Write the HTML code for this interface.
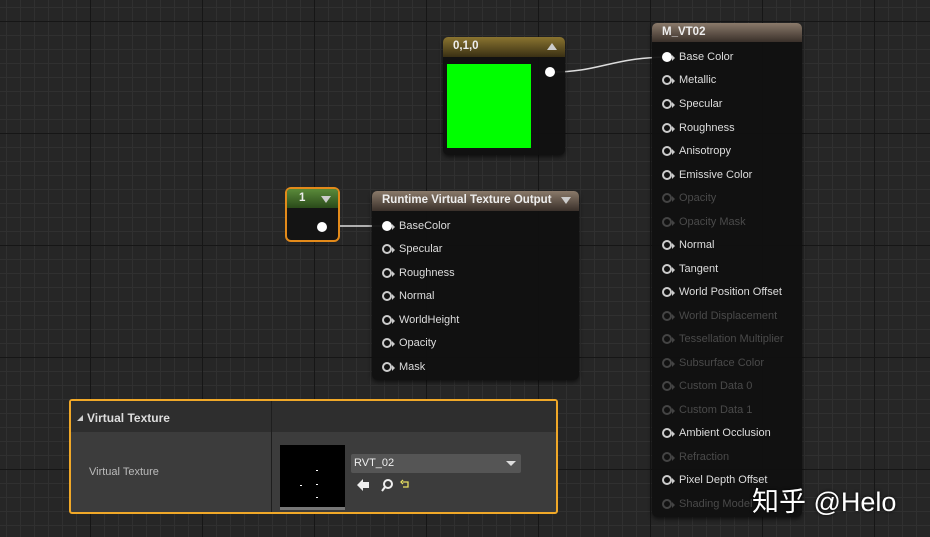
<!DOCTYPE html>
<html><head><meta charset="utf-8"><style>
*{margin:0;padding:0;box-sizing:border-box}
body{width:930px;height:537px;overflow:hidden;position:relative;font-family:"Liberation Sans","DejaVu Sans",sans-serif;
background-color:#262626;
background-image:
linear-gradient(to right,#161616 1px,transparent 1px),
linear-gradient(to bottom,#161616 1px,transparent 1px),
linear-gradient(to right,#303030 1px,transparent 1px),
linear-gradient(to bottom,#303030 1px,transparent 1px);
background-size:112px 112px,112px 112px,14px 14px,14px 14px;
background-position:90px 0,0 21px,6px 0,0 7px;}
.node{position:absolute;background:rgba(16,16,16,0.95);border-radius:5px;box-shadow:0 2px 4px rgba(0,0,0,.6)}
.hdr{height:20px;border-radius:5px 5px 0 0;color:#eee;font-size:11.5px;font-weight:bold;padding:3px 0 0 10px;position:relative;white-space:nowrap}
.row{position:absolute;left:0;font-size:11px;color:#ddd;white-space:nowrap}
.row i{position:absolute;left:10px;top:1px;width:10px;height:10px;border-radius:50%;border:2px solid #ccc}
.row i:after{content:"";position:absolute;right:-5px;top:1px;border-left:3px solid #ccc;border-top:3px solid transparent;border-bottom:3px solid transparent}
.row i.f{background:#fff;border-color:#fff}
.row span{position:absolute;left:27px;top:0px}
.dim{color:#4a4a4a}.dim i{border-color:#444}.dim i:after{border-left-color:#444}
.tri{position:absolute;right:8px;top:6px;border-left:5px solid transparent;border-right:5px solid transparent}
</style></head><body>
<svg style="position:absolute;left:0;top:0" width="930" height="537">
<path d="M552 72 C600 72,610 58,667 57" stroke="#ddd" stroke-width="1.5" fill="none"/>
<path d="M322 226 L384 226" stroke="#ddd" stroke-width="1.5" fill="none"/>
</svg>

<div class="node" style="left:443px;top:37px;width:122px;height:118px">
<div class="hdr" style="background:linear-gradient(#8a7430,#3a3014)">0,1,0<div class="tri" style="border-bottom:7px solid #ccc;top:6px"></div></div>
<div style="position:absolute;left:4px;top:27px;width:84px;height:84px;background:#00ff00"></div>
<div style="position:absolute;left:102px;top:30px;width:10px;height:10px;border-radius:50%;background:#fff"></div>
</div>

<div style="position:absolute;left:285px;top:187px;width:55px;height:55px;border:2px solid #e38a1a;border-radius:6px;background:#141414">
<div style="height:19px;background:linear-gradient(#5a8a3a,#2a4a1a);border-radius:3px 3px 0 0;color:#eee;font-size:11.5px;font-weight:bold;padding:3px 0 0 12px">1</div>
<div style="position:absolute;left:34px;top:7px;border-left:5px solid transparent;border-right:5px solid transparent;border-top:7px solid #ccc"></div>
<div style="position:absolute;left:30px;top:33px;width:10px;height:10px;border-radius:50%;background:#fff"></div>
</div>

<div class="node" style="left:372px;top:191px;width:207px;height:189px">
<div class="hdr" style="background:linear-gradient(#8a7a6a,#3a302a)">Runtime Virtual Texture Output<div class="tri" style="border-top:7px solid #ccc;top:6px"></div></div>
<div class="row" style="top:29px"><i class="f"></i><span>BaseColor</span></div>
<div class="row" style="top:52px"><i></i><span>Specular</span></div>
<div class="row" style="top:76px"><i></i><span>Roughness</span></div>
<div class="row" style="top:99px"><i></i><span>Normal</span></div>
<div class="row" style="top:123px"><i></i><span>WorldHeight</span></div>
<div class="row" style="top:146px"><i></i><span>Opacity</span></div>
<div class="row" style="top:170px"><i></i><span>Mask</span></div>
</div>

<div class="node" style="left:652px;top:23px;width:150px;height:494px">
<div class="hdr" style="background:linear-gradient(#8a7a6a,#3a302a);height:19px">M_VT02</div>
<div class="row" style="top:28px"><i class="f"></i><span>Base Color</span></div>
<div class="row" style="top:51px"><i></i><span>Metallic</span></div>
<div class="row" style="top:75px"><i></i><span>Specular</span></div>
<div class="row" style="top:99px"><i></i><span>Roughness</span></div>
<div class="row" style="top:122px"><i></i><span>Anisotropy</span></div>
<div class="row" style="top:146px"><i></i><span>Emissive Color</span></div>
<div class="row dim" style="top:169px"><i></i><span>Opacity</span></div>
<div class="row dim" style="top:193px"><i></i><span>Opacity Mask</span></div>
<div class="row" style="top:216px"><i></i><span>Normal</span></div>
<div class="row" style="top:240px"><i></i><span>Tangent</span></div>
<div class="row" style="top:263px"><i></i><span>World Position Offset</span></div>
<div class="row dim" style="top:287px"><i></i><span>World Displacement</span></div>
<div class="row dim" style="top:310px"><i></i><span>Tessellation Multiplier</span></div>
<div class="row dim" style="top:334px"><i></i><span>Subsurface Color</span></div>
<div class="row dim" style="top:357px"><i></i><span>Custom Data 0</span></div>
<div class="row dim" style="top:381px"><i></i><span>Custom Data 1</span></div>
<div class="row" style="top:404px"><i></i><span>Ambient Occlusion</span></div>
<div class="row dim" style="top:428px"><i></i><span>Refraction</span></div>
<div class="row" style="top:451px"><i></i><span>Pixel Depth Offset</span></div>
<div class="row dim" style="top:475px"><i></i><span>Shading Model</span></div>
</div>

<div style="position:absolute;left:69px;top:399px;width:489px;height:115px;border:2px solid #f0a828;border-radius:3px;background:#3c3c3c">
<div style="position:absolute;left:0;top:0;width:485px;height:31px;background:#2e2e2e"></div>
<div style="position:absolute;left:200px;top:0;width:1px;height:111px;background:#1e1e1e"></div>
<div style="position:absolute;left:6px;top:14px;border-left:6px solid transparent;border-bottom:6px solid #ccc"></div>
<div style="position:absolute;left:16px;top:10px;color:#ddd;font-size:12px;font-weight:bold">Virtual Texture</div>
<div style="position:absolute;left:18px;top:65px;color:#bbb;font-size:11px">Virtual Texture</div>
<div style="position:absolute;left:209px;top:44px;width:65px;height:65px;background:#000;border-bottom:3px solid #777"></div>
<div style="position:absolute;left:245px;top:69px;width:2px;height:1px;background:#fff"></div>
<div style="position:absolute;left:229px;top:84px;width:2px;height:1px;background:#fff"></div>
<div style="position:absolute;left:245px;top:83px;width:2px;height:1px;background:#fff"></div>
<div style="position:absolute;left:245px;top:96px;width:2px;height:1px;background:#fff"></div>
<div style="position:absolute;left:280px;top:53px;width:170px;height:19px;background:#555;border-radius:2px;color:#eee;font-size:11px;padding:3px 0 0 3px">RVT_02<div style="position:absolute;right:5px;top:7px;border-left:5px solid transparent;border-right:5px solid transparent;border-top:5px solid #ddd"></div></div>
<svg style="position:absolute;left:285px;top:76px" width="70" height="16">
<path d="M1 8 L7 2 L7 5 L13 5 L13 11 L7 11 L7 14 Z" fill="#eee"/>
<circle cx="32" cy="7" r="4" stroke="#eee" stroke-width="2" fill="none"/><path d="M29 10 L26 14" stroke="#eee" stroke-width="2"/>
<path d="M47 5 L52 5 L52 10 L47 10 M47 3 L45 5 L47 7" stroke="#e8e060" stroke-width="1.3" fill="none"/>
</svg>
</div>

<div style="position:absolute;left:752px;top:480px;color:#fff;font-size:27px;font-family:'Liberation Sans','Noto Sans CJK SC',sans-serif;text-shadow:0 0 3px #000;white-space:nowrap">知乎 @Helo</div>
</body></html>
